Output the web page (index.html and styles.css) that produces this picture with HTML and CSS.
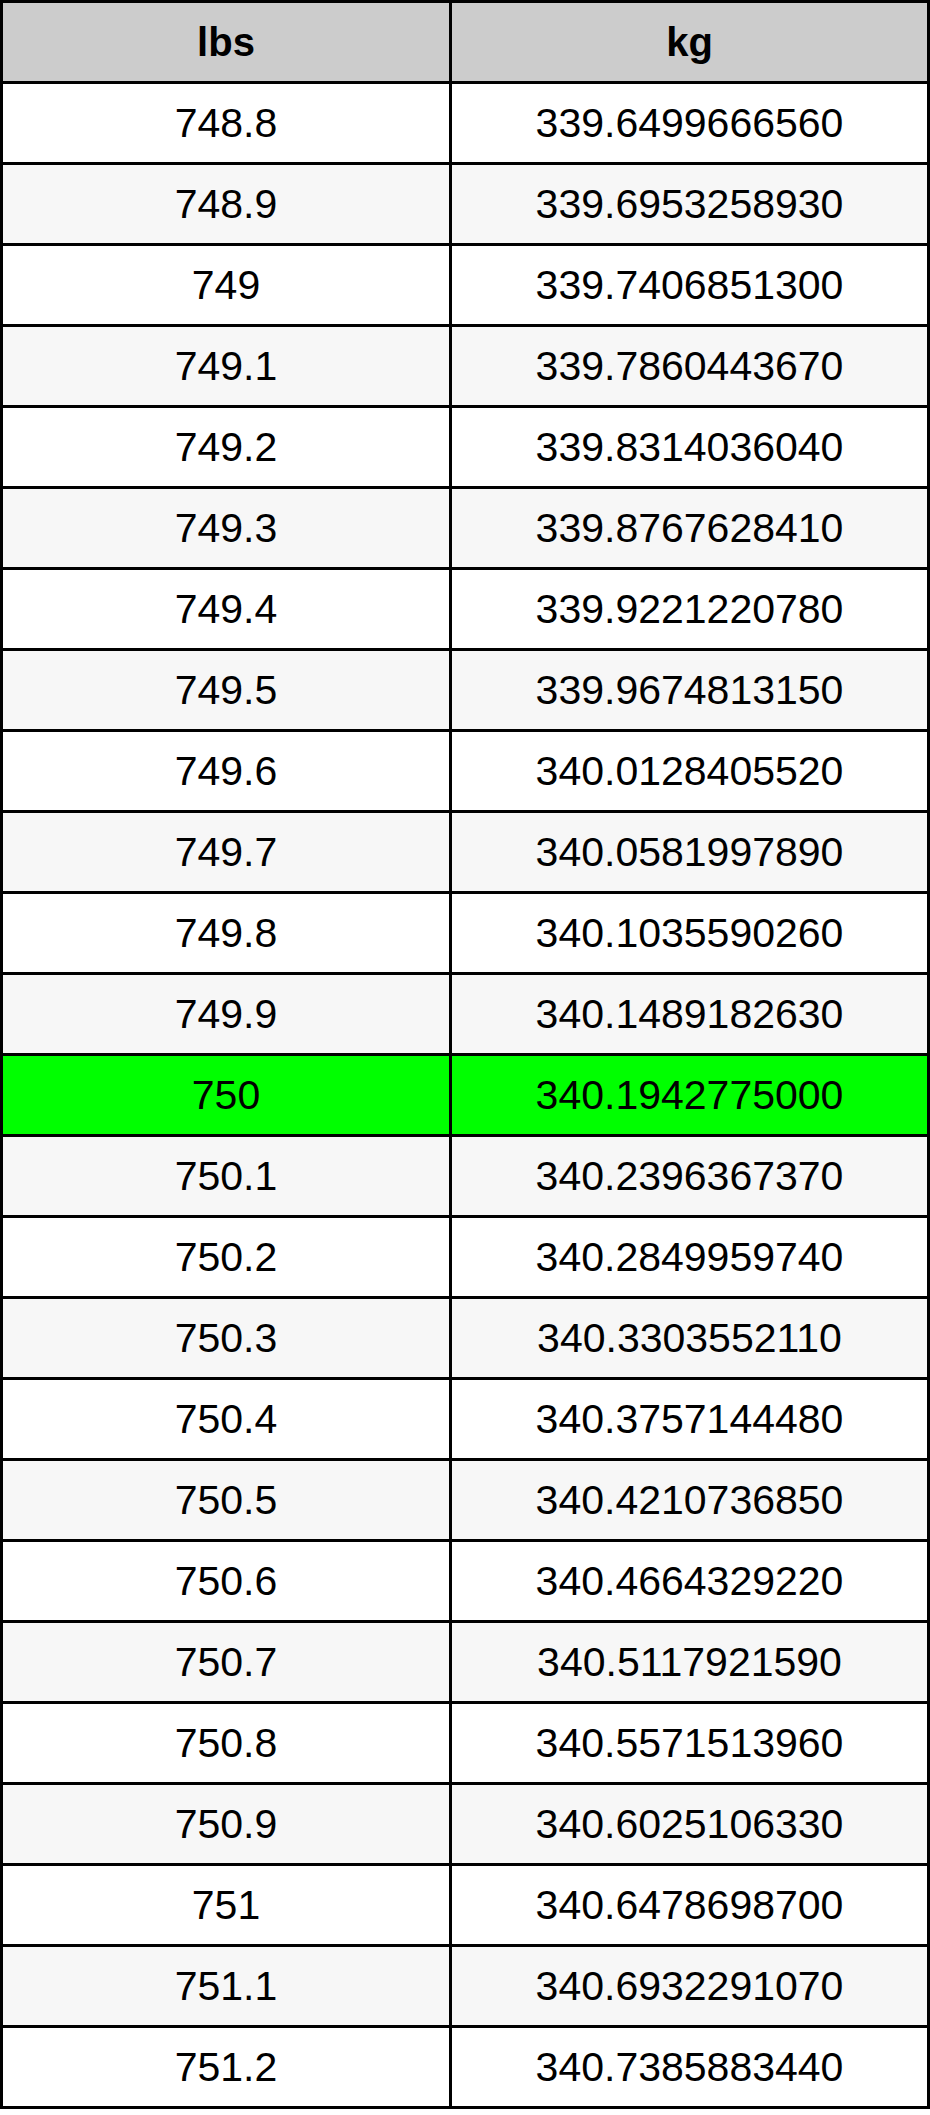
FILE: index.html
```html
<!DOCTYPE html>
<html lang="en">
<head>
<meta charset="utf-8">
<title>lbs to kg</title>
<link rel="stylesheet" href="styles.css">
</head>
<body>
<table class="conv">
<thead>
<tr><th class="c1">lbs</th><th class="c2">kg</th></tr>
</thead>
<tbody>
<tr><td>748.8</td><td>339.6499666560</td></tr>
<tr class="alt"><td>748.9</td><td>339.6953258930</td></tr>
<tr><td>749</td><td>339.7406851300</td></tr>
<tr class="alt"><td>749.1</td><td>339.7860443670</td></tr>
<tr><td>749.2</td><td>339.8314036040</td></tr>
<tr class="alt"><td>749.3</td><td>339.8767628410</td></tr>
<tr><td>749.4</td><td>339.9221220780</td></tr>
<tr class="alt"><td>749.5</td><td>339.9674813150</td></tr>
<tr><td>749.6</td><td>340.0128405520</td></tr>
<tr class="alt"><td>749.7</td><td>340.0581997890</td></tr>
<tr><td>749.8</td><td>340.1035590260</td></tr>
<tr class="alt"><td>749.9</td><td>340.1489182630</td></tr>
<tr class="hl"><td>750</td><td>340.1942775000</td></tr>
<tr class="alt"><td>750.1</td><td>340.2396367370</td></tr>
<tr><td>750.2</td><td>340.2849959740</td></tr>
<tr class="alt"><td>750.3</td><td>340.3303552110</td></tr>
<tr><td>750.4</td><td>340.3757144480</td></tr>
<tr class="alt"><td>750.5</td><td>340.4210736850</td></tr>
<tr><td>750.6</td><td>340.4664329220</td></tr>
<tr class="alt"><td>750.7</td><td>340.5117921590</td></tr>
<tr><td>750.8</td><td>340.5571513960</td></tr>
<tr class="alt"><td>750.9</td><td>340.6025106330</td></tr>
<tr><td>751</td><td>340.6478698700</td></tr>
<tr class="alt"><td>751.1</td><td>340.6932291070</td></tr>
<tr><td>751.2</td><td>340.7385883440</td></tr>
</tbody>
</table>
</body>
</html>
```
FILE: styles.css
```css
html, body {
  margin: 0;
  padding: 0;
  background: #ffffff;
}

.conv {
  border-collapse: separate;
  border-spacing: 3px;
  background: #000000;
  width: 930px;
  table-layout: fixed;
  font-family: "Liberation Sans", Arial, sans-serif;
  font-size: 41px;
  color: #000000;
}

.conv th,
.conv td {
  height: 78px;
  padding: 0;
  text-align: center;
  vertical-align: middle;
  line-height: 46px;
  background: #ffffff;
}

.conv th {
  background: #cccccc;
  font-weight: bold;
  font-size: 40px;
}

.conv .c1 {
  width: 446px;
}

.conv .c2 {
  width: 475px;
}

.conv tr.alt td {
  background: #f7f7f7;
}

.conv tr.hl td {
  background: #00ff00;
}
```
